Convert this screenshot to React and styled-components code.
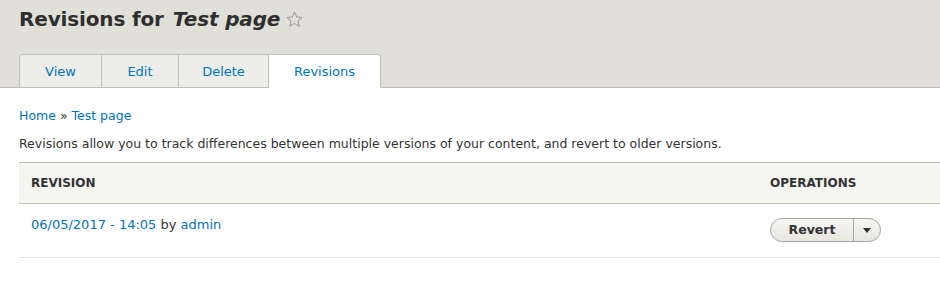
import styled, { createGlobalStyle } from 'styled-components';

const Global = createGlobalStyle`
	body {
		margin: 0;
		background: #fff;
		font-family: "DejaVu Sans", Verdana, sans-serif;
		font-size: 12.5px;
		color: #333;
	}
`

const Header = styled.div`
	background: #e0e0d8;
	padding: 7px 0 0 19px;
	border-bottom: 1px solid #bfbfba;
	height: 88px;
	box-sizing: border-box;
	display: flex;
	flex-direction: column;
	justify-content: space-between;
`

const Title = styled.h1`
	margin: 0;
	font-size: 20px;
	line-height: 24px;
	font-weight: bold;
	color: #2f2f2f;
	display: flex;
	align-items: center;
	gap: 5px;
	letter-spacing: -0.15px;
	em { font-style: italic; margin-left: 9px; }
`

const Tabs = styled.ul`
	display: flex;
	margin: 0 0 -1px;
	padding: 0;
	list-style: none;
`

const Tab = styled.li`
	height: 34px;
	box-sizing: border-box;
	width: ${p => p.$w}px;
	display: flex;
	align-items: center;
	justify-content: center;
	background: ${p => (p.$active ? '#fff' : '#ededea')};
	border: 1px solid #bfbfba;
	border-left-width: ${p => (p.$first ? 1 : 0)}px;
	border-bottom-color: ${p => (p.$active ? '#fff' : '#bfbfba')};
	border-radius: ${p => (p.$first ? '4px 0 0 0' : p.$active ? '0 4px 0 0' : '0')};
	color: #0074bd;
	font-size: 13px;
`

const Content = styled.div`
	padding: 20px 0 0 19px;
`

const Link = styled.a`
	color: #0074bd;
	text-decoration: none;
`

const Breadcrumb = styled.div`
	font-size: 12.5px;
	color: #333;
	margin-bottom: 13px;
`

const Description = styled.p`
	margin: 0 0 11px;
`

const Table = styled.table`
	width: 100%;
	border-collapse: collapse;
`

const Th = styled.th`
	text-align: left;
	background: #f5f5f2;
	border-top: 1px solid #bebfb9;
	border-bottom: 1px solid #bebfb9;
	height: 40px;
	padding: 0 12px;
	font-size: 12px;
	font-weight: bold;
	text-transform: uppercase;
	color: #333;
	width: ${p => p.$w || 'auto'};
`

const Td = styled.td`
	border-bottom: 1px solid #e6e4df;
	padding: ${p => p.$pt}px 12px 0;
	height: ${p => 53 - p.$pt}px;
	vertical-align: top;
	line-height: 16px;
	font-size: 13px;
`

const Dropbutton = styled.div`
	display: inline-flex;
	height: 24px;
	border: 1px solid #a6a6a6;
	border-radius: 13px;
	background: linear-gradient(#f6f6f3, #e7e7df);
	overflow: hidden;
	box-sizing: border-box;
`

const DropMain = styled.span`
	width: 82px;
	display: flex;
	align-items: center;
	justify-content: center;
	font-weight: bold;
	font-size: 12.5px;
	color: #333;
	border-right: 1px solid #a6a6a6;
`

const DropToggle = styled.span`
	width: 26px;
	display: flex;
	align-items: center;
	justify-content: center;
`

function Star() {
	return (
		<svg width="19" height="19" viewBox="0 0 24 24">
			<path d="M12 2.5l2.8 6.3 6.8.6-5.2 4.5 1.6 6.7L12 17.1l-5.9 3.5 1.6-6.7-5.2-4.5 6.8-.6z" fill="none" stroke="#8e8e85" strokeWidth="1.1" strokeLinejoin="round"/>
		</svg>
	)
}

export default function App() {
	return (
		<>
			<Global />
			<Header>
				<Title><span>Revisions for<em>Test page</em></span><Star /></Title>
				<Tabs>
					<Tab $w={83} $first>View</Tab>
					<Tab $w={77}>Edit</Tab>
					<Tab $w={90}>Delete</Tab>
					<Tab $w={112} $active>Revisions</Tab>
				</Tabs>
			</Header>
			<Content>
				<Breadcrumb><Link href="#">Home</Link> » <Link href="#">Test page</Link></Breadcrumb>
				<Description>Revisions allow you to track differences between multiple versions of your content, and revert to older versions.</Description>
				<Table>
					<thead>
						<tr>
							<Th>Revision</Th>
							<Th $w="158px">Operations</Th>
						</tr>
					</thead>
					<tbody>
						<tr>
							<Td $pt={13}><Link href="#">06/05/2017 - 14:05</Link> by <Link href="#">admin</Link></Td>
							<Td $pt={14}>
								<Dropbutton>
									<DropMain>Revert</DropMain>
									<DropToggle>
										<svg width="8" height="5" viewBox="0 0 8 5"><path d="M0 0h8L4 5z" fill="#333" /></svg>
									</DropToggle>
								</Dropbutton>
							</Td>
						</tr>
					</tbody>
				</Table>
			</Content>
		</>
	);
}
